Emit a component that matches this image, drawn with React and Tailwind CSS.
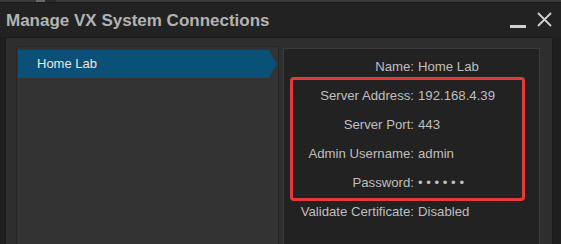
import React from "react";

const rows = [
  ["Name:", "Home Lab"],
  ["Server Address:", "192.168.4.39"],
  ["Server Port:", "443"],
  ["Admin Username:", "admin"],
  ["Password:", "\u2022 \u2022 \u2022 \u2022 \u2022 \u2022"],
  ["Validate Certificate:", "Disabled"],
];

export default function App() {
  return (
    <div
      className="w-[561px] h-[244px] overflow-hidden bg-[#1f1f1f] flex flex-col"
      style={{ fontFamily: '"Liberation Sans", Arial, sans-serif' }}
    >
      <div className="h-[2px] bg-[#3a3a3a] flex shrink-0">
        <div className="w-[36px]" />
        <div className="w-[9px] bg-[#6a6a6a]" />
        <div className="w-[11px] bg-[#2a2a2a]" />
      </div>
      <div className="h-[35px] shrink-0 flex items-center justify-between pl-[6px] pr-[9px] bg-[#222222] border-t border-[#1a1a1a]">
        <div className="text-[17px] font-bold text-[#b3b3b3] leading-none">
          Manage VX System Connections
        </div>
        <div className="flex items-center gap-[11px]">
          <div className="w-[16px] h-[3px] bg-[#cfcfcf] mt-[13px]" />
          <svg width="15" height="15" viewBox="0 0 15 15" className="mt-[-1px]">
            <path d="M1 1 L14 14 M14 1 L1 14" stroke="#d0d0d0" strokeWidth="1.8" fill="none" />
          </svg>
        </div>
      </div>
      <div className="flex-1 ml-[5px] w-[548px] bg-[#2e2e2e] border border-b-0 border-[#1a1a1a] flex pl-[10px] pr-[12px] pt-[8px] gap-[4px]">
        <div className="w-[263px] bg-[#333333] border border-b-0 border-[#272727] pt-[3px] pl-[1px]">
          <div
            className="h-[28px] w-[259px] bg-[#0b5077] flex items-center pl-[19px] text-[13px] text-[#e8e8e8]"
            style={{ clipPath: "polygon(0 0, 251px 0, 259px 50%, 251px 100%, 0 100%)" }}
          >
            Home Lab
          </div>
        </div>
        <div className="relative w-[257px] mt-[2px] bg-[#222222] border border-b-0 border-[#3b3b3b] pt-[3px]">
          {rows.map(([label, value]) => (
            <div key={label} className="h-[29px] flex items-center text-[13.2px] text-[#bfbfbf] whitespace-nowrap">
              <span className="w-[130px] text-right shrink-0">{label}</span>
              <span className="ml-[4px]">{value}</span>
            </div>
          ))}
          <div className="absolute left-[6px] top-[28px] w-[235px] h-[124px] border-[3px] border-[#e53a3a] rounded-[4px]" />
        </div>
      </div>
    </div>
  );
}
